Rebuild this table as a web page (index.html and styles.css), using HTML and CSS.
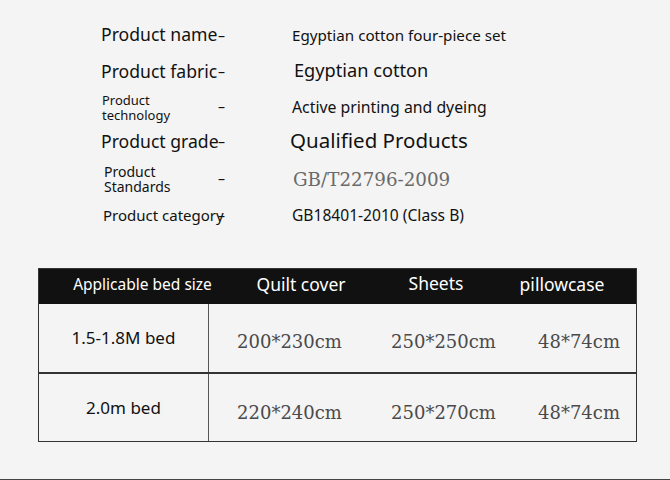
FILE: index.html
```html
<!DOCTYPE html>
<html>
<head>
<meta charset="utf-8">
<link rel="stylesheet" href="styles.css">
</head>
<body>
<div class="page">
  <div class="specs">
    <div class="row r1">
      <div class="label l-lg">Product name</div>
      <div class="dash">–</div>
      <div class="value v-sm">Egyptian cotton four-piece set</div>
    </div>
    <div class="row r2">
      <div class="label l-lg">Product fabric</div>
      <div class="dash">–</div>
      <div class="value v-md shift">Egyptian cotton</div>
    </div>
    <div class="row r3">
      <div class="label l-xs">Product<br>technology</div>
      <div class="dash">–</div>
      <div class="value v-mid">Active printing and dyeing</div>
    </div>
    <div class="row r4">
      <div class="label l-lg">Product grade</div>
      <div class="dash">–</div>
      <div class="value v-lg">Qualified Products</div>
    </div>
    <div class="row r5">
      <div class="label l-st">Product<br>Standards</div>
      <div class="dash">–</div>
      <div class="value v-serif">GB/T22796-2009</div>
    </div>
    <div class="row r6">
      <div class="label l-sm">Product category</div>
      <div class="dash">–</div>
      <div class="value v-cat">GB18401-2010 (Class B)</div>
    </div>
  </div>

  <div class="table">
    <div class="thead">
      <div class="th">Applicable bed size</div>
      <div class="th th-big">Quilt cover</div>
      <div class="th th-big th-up">Sheets</div>
      <div class="th th-big">pillowcase</div>
    </div>
    <div class="tr">
      <div class="tc-first">1.5-1.8M bed</div>
      <div class="tc">200*230cm</div>
      <div class="tc">250*250cm</div>
      <div class="tc tc-last">48*74cm</div>
    </div>
    <div class="tr tr-last">
      <div class="tc-first">2.0m bed</div>
      <div class="tc">220*240cm</div>
      <div class="tc">250*270cm</div>
      <div class="tc tc-last">48*74cm</div>
    </div>
  </div>
</div>
<div class="bottom-line"></div>
</body>
</html>
```
FILE: styles.css
```css
html, body {
  margin: 0;
  padding: 0;
  background: #f4f4f4;
}
body {
  width: 670px;
  height: 480px;
  overflow: hidden;
  position: relative;
  font-family: "Noto Sans", "Open Sans", sans-serif;
  color: #111;
}
.page {
  padding-top: 18px;
}
.specs {
  display: flex;
  flex-direction: column;
  padding-left: 101px;
}
.row {
  display: grid;
  grid-template-columns: 116px 75px 1fr;
  align-items: center;
  height: 36px;
}
.r1 .label { margin-top: -2px; }
.r3 { height: 34px; }
.r4 { height: 36px; }
.r5 { height: 38px; }
.label {
  white-space: nowrap;
  line-height: 1;
}
.l-lg { font-size: 17.6px; }
.l-sm { font-size: 15px; padding-left: 2px; margin-top: -2px; }
.l-xs { font-size: 13px; line-height: 15px; padding-left: 1px; padding-top: 2px; }
.l-st { font-size: 14px; line-height: 15.5px; padding-left: 3px; }
.dash {
  font-size: 14px;
  line-height: 1;
  padding-left: 1px;
}
.value {
  white-space: nowrap;
  line-height: 1;
}
.v-sm { font-size: 15.2px; }
.v-cat { font-size: 15.6px; }
.v-md { font-size: 18.2px; margin-top: -3px; }
.v-mid { font-size: 15.8px; margin-top: 2px; }
.v-lg { font-size: 20.5px; margin-left: -2px; margin-top: -4px; }
.v-serif {
  font-family: "DejaVu Serif", "Liberation Serif", serif;
  font-size: 18.3px;
  color: #6a6a6a;
  margin-left: 1px;
  margin-top: 2px;
}
.shift { margin-left: 2px; }

.table {
  margin: 34px 0 0 38px;
  width: 599px;
  box-sizing: border-box;
  border: 1.5px solid #333;
}
.thead {
  display: grid;
  grid-template-columns: 207px 110px 160px 92px 1fr;
  height: 35px;
  align-items: center;
  background: #111;
  color: #fff;
}
.th {
  text-align: center;
  font-size: 15.5px;
  white-space: nowrap;
  margin-top: -6px;
}
.th-big { font-size: 17.5px; }
.th-up { margin-top: -8px; }
.tr {
  display: grid;
  grid-template-columns: 170px 161px 147px 1fr;
  height: 68px;
  border-bottom: 2px solid #333;
}
.tr-last { border-bottom: none; height: 67px; }
.tr-last .tc-first { padding-bottom: 0; }
.tr-last .tc { padding-top: 9px; }
.tc-first {
  display: flex;
  align-items: center;
  justify-content: center;
  border-right: 1.5px solid #555;
  font-size: 17px;
  padding-bottom: 2px;
}
.tc {
  display: flex;
  align-items: center;
  justify-content: center;
  font-family: "DejaVu Serif", "Liberation Serif", serif;
  font-size: 18px;
  color: #4a4a4a;
  padding-top: 7px;
}
.tc-last { padding-left: 5px; }
.bottom-line {
  position: absolute;
  left: 0;
  right: 0;
  bottom: 0;
  height: 1px;
  background: #444;
}
```
